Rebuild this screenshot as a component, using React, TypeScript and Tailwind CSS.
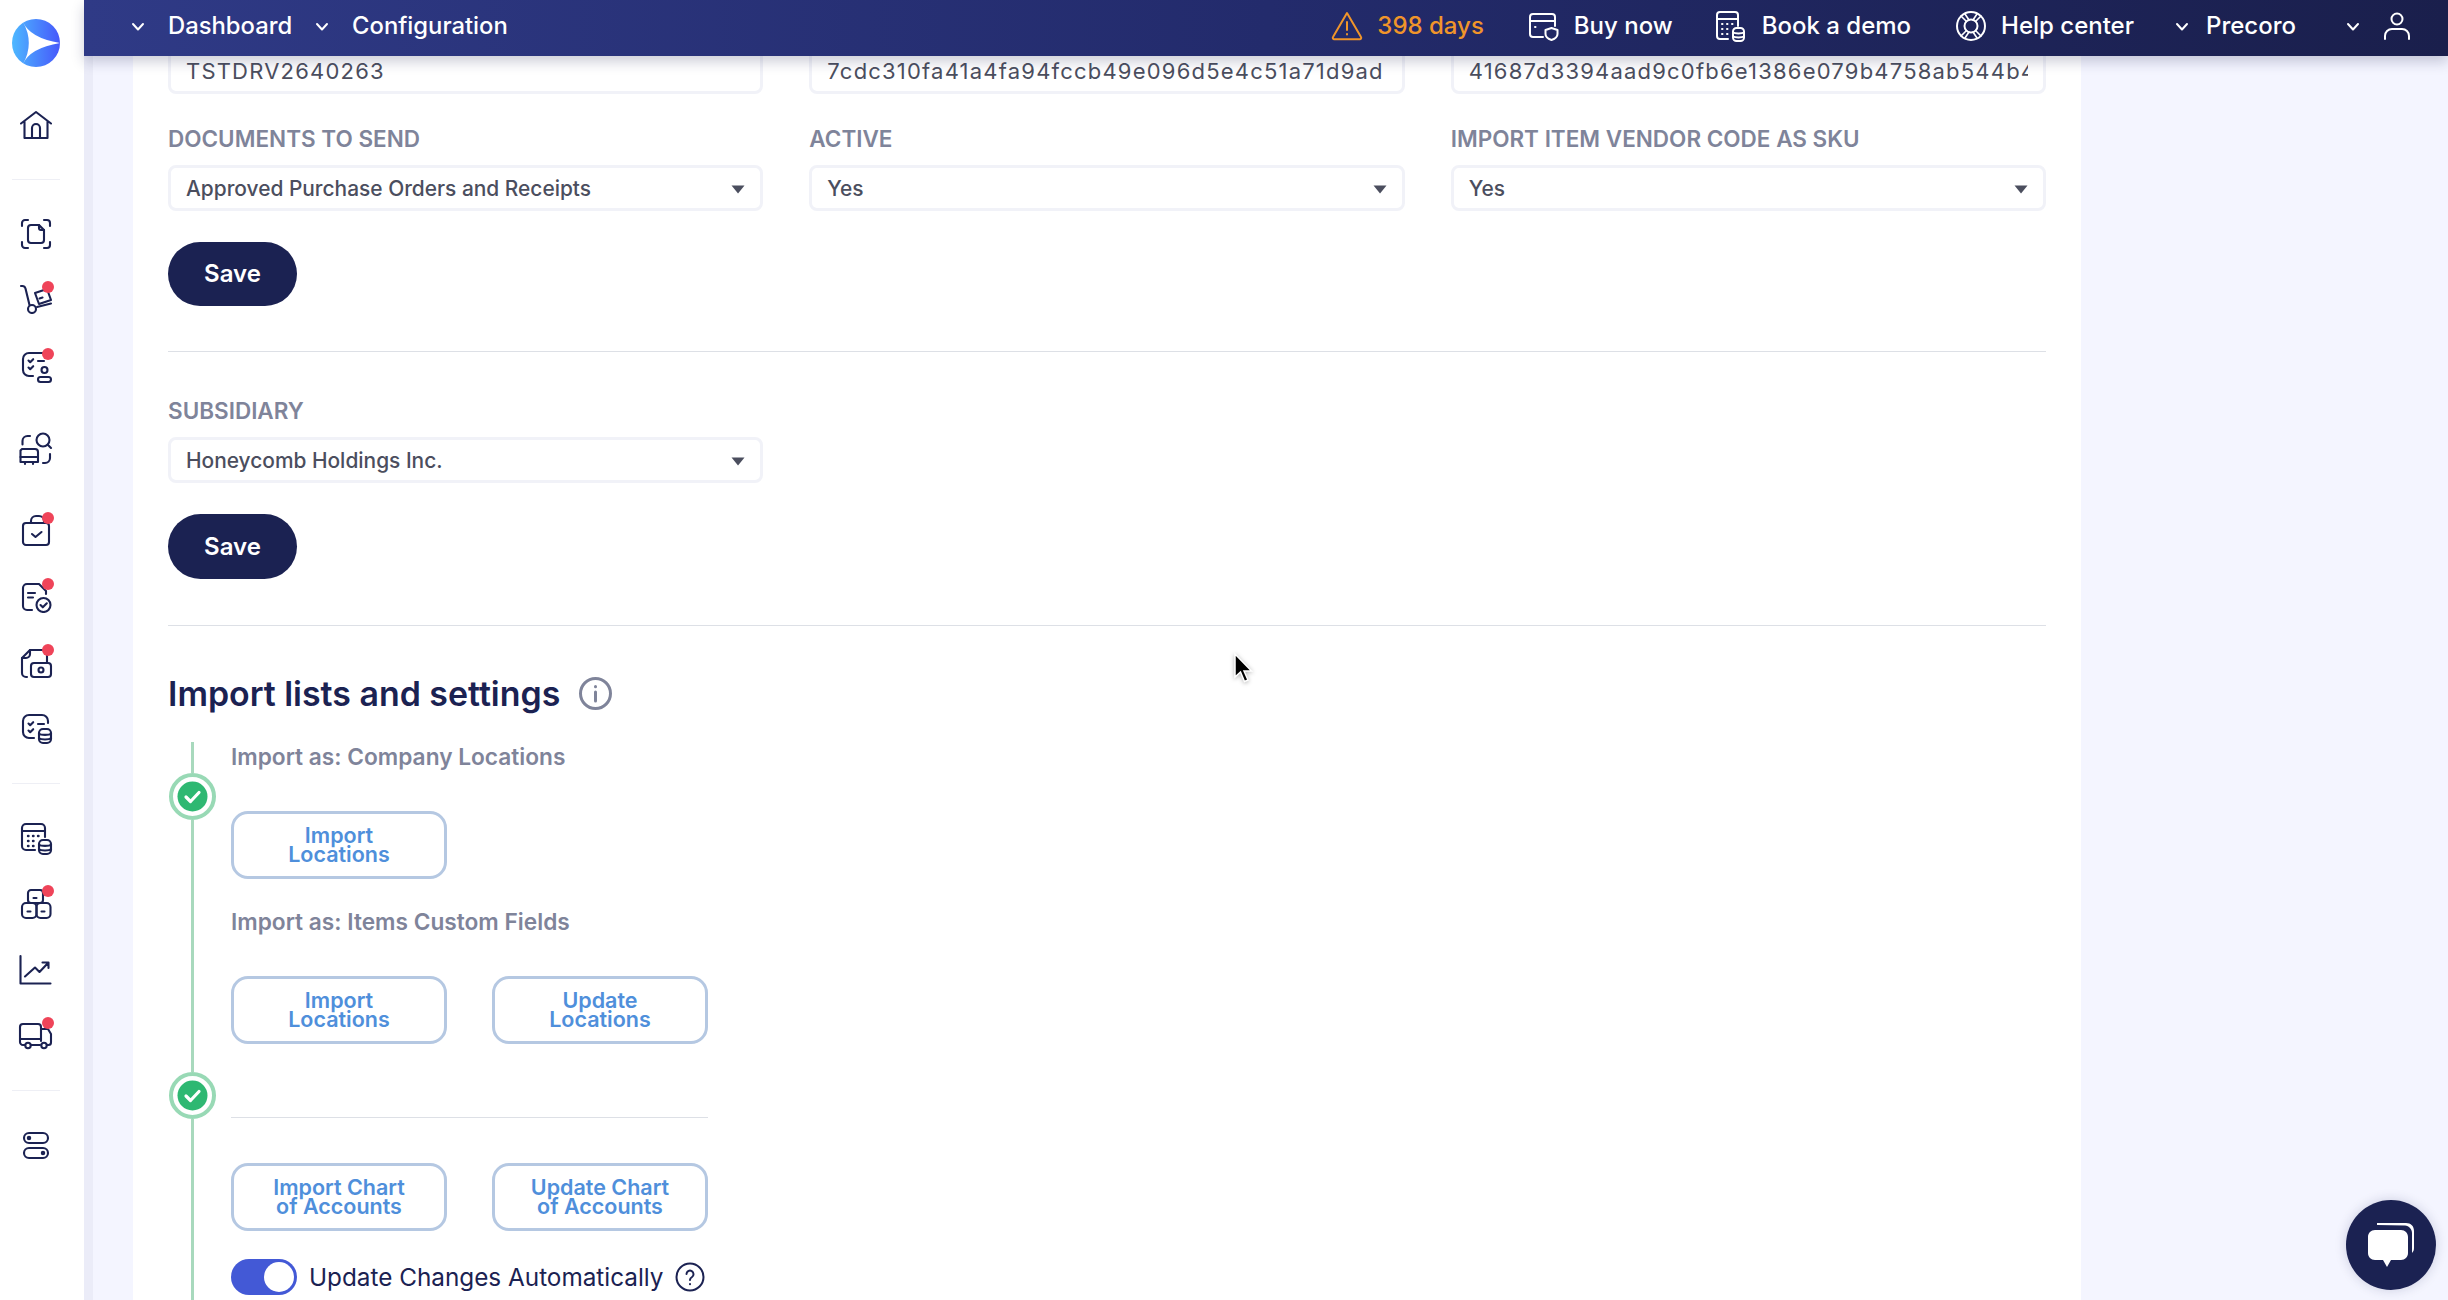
import React from "react";

const INK = "#1b2252";

function Ico({ children, size = 36, stroke = INK, sw = 2.1 }: { children: React.ReactNode; size?: number; stroke?: string; sw?: number }) {
  return (
    <svg width={size} height={size} viewBox={`0 0 ${size} ${size}`} fill="none" stroke={stroke} strokeWidth={sw} strokeLinecap="round" strokeLinejoin="round">
      {children}
    </svg>
  );
}

function Db({ x, y }: { x: number; y: number }) {
  return (
    <g transform={`translate(${x} ${y})`}>
      <rect x="0" y="0" width="12" height="14" rx="4" />
      <path d="M0 4.7c2 1.6 10 1.6 12 0M0 9.3c2 1.6 10 1.6 12 0" />
    </g>
  );
}

function SideItem({ mt, dot, children }: { mt: string; dot?: string; children: React.ReactNode }) {
  return (
    <div className={`relative h-[36px] w-[36px] shrink-0 ${mt}`}>
      {children}
      {dot && <span className={`absolute right-0 h-[12px] w-[12px] rounded-full bg-[#ef4459] ${dot}`} />}
    </div>
  );
}

function Sidebar() {
  return (
    <aside className="relative z-10 flex h-full w-[84px] shrink-0 flex-col items-center bg-white pr-[12px] shadow-[9px_0_0_#ebecf8]">
      <svg className="mt-[19px] shrink-0" width="48" height="48" viewBox="0 0 48 48">
        <defs>
          <linearGradient id="lg" x1="0" x2="1" y1="0" y2="0">
            <stop offset="0" stopColor="#4db8ff" />
            <stop offset="1" stopColor="#4658fb" />
          </linearGradient>
        </defs>
        <circle cx="24" cy="24" r="24" fill="url(#lg)" />
        <path d="M11 3 Q18 19 48 24 Q18 29 11 45 Q22.6 24 11 3z" fill="#fff" />
      </svg>
      <SideItem mt="mt-[40px]">
        <Ico>
          <path d="M3 16.5 18 5l15 11.5M6.5 14.5V31h23V14.5" />
          <path d="M14 31V21a4 4 0 0 1 8 0v10" />
        </Ico>
      </SideItem>
      <div className="mt-[36px] h-px w-[48px] shrink-0 bg-[#eeeff5]" />
      <SideItem mt="mt-[36px]">
        <Ico>
          <path d="M4 10V7a3 3 0 0 1 3-3h3M26 4h3a3 3 0 0 1 3 3v3M32 26v3a3 3 0 0 1-3 3h-3M10 32H7a3 3 0 0 1-3-3v-3" />
          <path d="M13 9h8l5 5v10a3 3 0 0 1-3 3H13a3 3 0 0 1-3-3V12a3 3 0 0 1 3-3z" />
          <path d="M21 9v3a2 2 0 0 0 2 2h3" />
        </Ico>
      </SideItem>
      <SideItem mt="mt-[26px]" dot="top-[3px]">
        <Ico>
          <path d="M3 8h1.5c1.5 0 2.5 1 3 2.5L11.5 27" />
          <circle cx="14" cy="31" r="4" />
          <path d="M19 29l14-3.5" />
          <path d="M17 15l12-4 4 11-12 4z" />
          <path d="M21.5 20.5l3-1" />
        </Ico>
      </SideItem>
      <SideItem mt="mt-[34px]" dot="top-0">
        <Ico>
          <path d="M30 5H11a6 6 0 0 0-6 6v11a6 6 0 0 0 6 6h4" />
          <path d="M10.5 12.5l1.7 1.7 3-3M10.5 19.5l1.7 1.7 3-3M20 13h6" />
          <circle cx="26.5" cy="22" r="3" />
          <rect x="20" y="29" width="13" height="5" rx="2.5" />
        </Ico>
      </SideItem>
      <SideItem mt="mt-[46px]">
        <Ico>
          <circle cx="25" cy="10" r="6.5" />
          <path d="M30 15l3 3" />
          <path d="M4.5 14.5V11a5 5 0 0 1 5-5H12M32 24v4a5 5 0 0 1-5 5h-2" />
          <path d="M4 19h13a3 3 0 0 1 3 3v10H2.5V20.500z" />
          <path d="M2.500 27H20M7 32v2M15 32v2" />
        </Ico>
      </SideItem>
      <SideItem mt="mt-[46px]" dot="top-0">
        <Ico>
          <rect x="5" y="11" width="26" height="22" rx="3" />
          <path d="M13 11V9a5 5 0 0 1 5-5h3a5 5 0 0 1 5 5v2" />
          <path d="M14 22l3.500 3 6-5" />
        </Ico>
      </SideItem>
      <SideItem mt="mt-[29px]" dot="top-[1px]">
        <Ico>
          <path d="M14 33H9a4 4 0 0 1-4-4V11a4 4 0 0 1 4-4h12l7 7v3" />
          <path d="M10 16h7M10 20.500h5" />
          <circle cx="25.500" cy="28" r="7" />
          <path d="M22.500 28l2.300 2.300 4-4" />
        </Ico>
      </SideItem>
      <SideItem mt="mt-[30px]" dot="top-[1px]">
        <Ico>
          <path d="M9 34H8a4 4 0 0 1-4-4V15l8-8h14a3 3 0 0 1 3 3v10" />
          <path d="M12 7v4a4 4 0 0 1-4 4H4" />
          <rect x="13" y="20" width="20" height="14" rx="3" />
          <circle cx="23" cy="27" r="2.500" />
        </Ico>
      </SideItem>
      <SideItem mt="mt-[31px]">
        <Ico>
          <path d="M30 13V11a6 6 0 0 0-6-6H11a6 6 0 0 0-6 6v11a6 6 0 0 0 6 6h5" />
          <path d="M10.500 13.500l1.700 1.700 3-3M10.500 20.500l1.700 1.700 3-3M20 14h6" />
          <Db x={21} y={19} />
        </Ico>
      </SideItem>
      <div className="mt-[37px] h-px w-[48px] shrink-0 bg-[#eeeff5]" />
      <SideItem mt="mt-[36px]">
        <Ico>
          <path d="M17 30H8a4 4 0 0 1-4-4V8a4 4 0 0 1 4-4h15a4 4 0 0 1 4 4v9" />
          <path d="M4 11h23" />
          <path d="M10 16h.5M15 16h.5M20 16h.5M10 21h.5M15 21h.5M10 26h.5M15 26h.5" strokeWidth="2.400" />
          <Db x={21} y={20} />
        </Ico>
      </SideItem>
      <SideItem mt="mt-[29px]" dot="top-0">
        <Ico>
          <rect x="10" y="5" width="15" height="13" rx="3" />
          <rect x="4" y="18" width="14.500" height="15" rx="4" />
          <rect x="18.500" y="18" width="14" height="15" rx="4" />
          <path d="M15.500 13h3M9.500 26.500h3M23.500 26.500h3" />
        </Ico>
      </SideItem>
      <SideItem mt="mt-[31px]">
        <Ico>
          <path d="M2.500 4v27.500h30" />
          <path d="M7 24.500 17 15.500l4.500 4.500L30 11M24.500 10.500H30.500V16" />
        </Ico>
      </SideItem>
      <SideItem mt="mt-[28px]" dot="top-[1px]">
        <Ico>
          <path d="M7 29H5a3 3 0 0 1-3-3V11a3 3 0 0 1 3-3h15a3 3 0 0 1 3 3v14" />
          <path d="M2 23h21M13 29h9M29 29h1.500a2.500 2.500 0 0 0 2.500-2.500V18l-3-5h-7" />
          <circle cx="10" cy="29.500" r="2.700" />
          <circle cx="26" cy="29.500" r="2.700" />
        </Ico>
      </SideItem>
      <div className="mt-[38px] h-px w-[48px] shrink-0 bg-[#eeeff5]" />
      <SideItem mt="mt-[36px]">
        <Ico>
          <rect x="6" y="6" width="24" height="10" rx="5" />
          <rect x="6" y="21" width="24" height="10" rx="5" />
          <circle cx="11" cy="11" r="1.200" fill={INK} />
          <circle cx="25" cy="26" r="1.200" fill={INK} />
        </Ico>
      </SideItem>
    </aside>
  );
}

function Chevron({ className }: { className: string }) {
  return (
    <svg className={`shrink-0 ${className}`} width="14" height="10" viewBox="0 0 14 10" fill="none" stroke="#fff" strokeWidth="2" strokeLinecap="round" strokeLinejoin="round">
      <path d="M2 2l5 5.500L12 2" />
    </svg>
  );
}

function Header() {
  return (
    <header className="relative z-20 flex h-[56px] shrink-0 items-center bg-gradient-to-r from-[#2f3a86] via-[#232b6c] to-[#1a1f4c] pb-[4px] pl-[47px] text-[24px] font-medium text-white shadow-[0_6px_12px_rgba(30,35,80,0.22)]">
      <Chevron className="mt-px" />
      <span className="ml-[23px] text-[23.800px]">Dashboard</span>
      <Chevron className="ml-[23px] mt-px" />
      <span className="ml-[23px] text-[23.800px]">Configuration</span>
      <div className="ml-auto flex items-center">
        <svg width="32" height="30" viewBox="0 0 32 30" fill="none" stroke="#f0952a" strokeWidth="2" strokeLinecap="round" strokeLinejoin="round">
          <path d="M16 2 30 26a1.500 1.500 0 0 1-1.300 2.300H3.300A1.500 1.500 0 0 1 2 26z" />
          <path d="M16 11v8M16 23v.5" />
        </svg>
        <span className="ml-[14px] text-[#f0952a]">398 days</span>
        <svg className="ml-[44px]" width="32" height="32" viewBox="0 0 32 32" fill="none" stroke="#fff" strokeWidth="2" strokeLinecap="round" strokeLinejoin="round">
          <path d="M15 27H5a3 3 0 0 1-3-3V7a3 3 0 0 1 3-3h19a3 3 0 0 1 3 3v9" />
          <path d="M2 11h25M7 17h.5" />
          <path d="M23.500 18l6 2v4c0 3-3 5-6 6-3-1-6-3-6-6v-4z" />
        </svg>
        <span className="ml-[14px]">Buy now</span>
        <svg className="ml-[41px]" width="32" height="32" viewBox="0 0 32 32" fill="none" stroke="#fff" strokeWidth="2" strokeLinecap="round" strokeLinejoin="round">
          <path d="M14 29H6a3 3 0 0 1-3-3V5a3 3 0 0 1 3-3h15a3 3 0 0 1 3 3v11" />
          <path d="M3 9h21M8 14h.5M13 14h.5M18 14h.5M8 19h.5M13 19h.5M8 24h.5M13 24h.5" />
          <rect x="19" y="18" width="11" height="13" rx="3.500" />
          <path d="M19 22.500c2 1.300 9 1.300 11 0M19 26.500c2 1.300 9 1.300 11 0" />
        </svg>
        <span className="ml-[16px]">Book a demo</span>
        <svg className="ml-[44px]" width="32" height="32" viewBox="0 0 32 32" fill="none" stroke="#fff" strokeWidth="2" strokeLinecap="round" strokeLinejoin="round">
          <circle cx="16" cy="16" r="14" />
          <circle cx="16" cy="16" r="6.500" />
          <path d="M6 6l5.500 5.500M26 6l-5.500 5.500M6 26l5.500-5.500M26 26l-5.500-5.500M10 4l4 6M22 4l-4 6M10 28l4-6M22 28l-4-6" strokeWidth="1.600" />
        </svg>
        <span className="ml-[14px]">Help center</span>
        <Chevron className="ml-[41px] mt-px" />
        <span className="ml-[17px]">Precoro</span>
        <Chevron className="ml-[50px] mt-px" />
        <svg className="ml-[23px] mr-[37px]" width="28" height="28" viewBox="0 0 28 28" fill="none" stroke="#fff" strokeWidth="2" strokeLinecap="round">
          <circle cx="14" cy="7" r="5.500" />
          <path d="M2 27v-3a7 7 0 0 1 7-7h10a7 7 0 0 1 7 7v3" />
        </svg>
      </div>
    </header>
  );
}

function Arrow() {
  return (
    <svg className="ml-auto mt-[2px] shrink-0" width="14" height="9" viewBox="0 0 14 9">
      <path d="M0.500 0.500h13L7 8.500z" fill="#4b4e5e" />
    </svg>
  );
}

function Input({ value }: { value: string }) {
  return (
    <div className="flex h-[46px] items-center rounded-[8px] border-[3px] border-[#f1f2f8] bg-white pl-[15px] pr-[15px] text-[22px] tracking-[1.200px] whitespace-nowrap text-[#4b4e5e]">
      <span className="min-w-0 flex-1 overflow-hidden">{value}</span>
    </div>
  );
}

function Select({ label, value }: { label: string; value: string }) {
  return (
    <div className="flex flex-col">
      <div className="h-[24px] pt-[1px] text-[22.500px] leading-[24px] font-semibold text-[#7f849a]">{label}</div>
      <div className="mt-[15px] flex h-[46px] items-center rounded-[8px] border-[3px] border-[#f1f2f8] bg-white pl-[15px] pr-[15px] text-[20.900px] font-medium text-[#4b4e5e]">
        <span className="pt-[1px]">{value}</span>
        <Arrow />
      </div>
    </div>
  );
}

function SaveBtn({ mt, h }: { mt: string; h: string }) {
  return (
    <button className={`${mt} ${h} block w-[129px] rounded-full bg-[#1b2252] text-[24px] font-semibold text-white`}>Save</button>
  );
}

function OutlineBtn({ a, b }: { a: string; b: string }) {
  return (
    <button className="h-[68px] w-[216px] rounded-[17px] border-[3px] border-[#b5c8e2] bg-white text-center text-[21.500px] leading-[19px] font-semibold text-[#4f8fdb]">
      {a}
      <br />
      {b}
    </button>
  );
}

function Dot() {
  return (
    <div className="flex h-[47px] w-[47px] shrink-0 items-center justify-center rounded-full border-[4px] border-[#98d9b5] bg-white">
      <svg width="31" height="31" viewBox="0 0 31 31">
        <circle cx="15.500" cy="15.500" r="15" fill="#2eb872" />
        <path d="M9 16l4.500 4.500L22 11.500" fill="none" stroke="#fff" strokeWidth="3.200" strokeLinecap="round" strokeLinejoin="round" />
      </svg>
    </div>
  );
}

function Steps() {
  return (
    <div className="mt-[28px] flex">
      <div className="flex w-[48px] shrink-0 flex-col items-center">
        <div className="h-[31px] w-[3px] bg-[#a8d9bd]" />
        <Dot />
        <div className="h-[252px] w-[3px] bg-[#a8d9bd]" />
        <Dot />
        <div className="h-[300px] w-[3px] bg-[#a8d9bd]" />
      </div>
      <div className="ml-[15px] w-[477px]">
        <div className="h-[30px] text-[22.700px] leading-[30px] font-semibold text-[#7f849a]">Import as: Company Locations</div>
        <div className="mt-[39px] flex">
          <OutlineBtn a="Import" b="Locations" />
        </div>
        <div className="mt-[28px] h-[30px] text-[22.700px] leading-[30px] font-semibold text-[#7f849a]">Import as: Items Custom Fields</div>
        <div className="mt-[39px] flex gap-[45px]">
          <OutlineBtn a="Import" b="Locations" />
          <OutlineBtn a="Update" b="Locations" />
        </div>
        <div className="mt-[73px] h-px bg-[#dde0e6]" />
        <div className="mt-[45px] flex gap-[45px]">
          <OutlineBtn a="Import Chart" b="of Accounts" />
          <OutlineBtn a="Update Chart" b="of Accounts" />
        </div>
        <div className="mt-[27px] flex items-center whitespace-nowrap">
          <div className="flex h-[36px] w-[66px] shrink-0 items-center justify-end rounded-full bg-[#4359d6] pr-[3px]">
            <div className="h-[30px] w-[30px] rounded-full bg-white" />
          </div>
          <span className="ml-[12px] pt-[1px] text-[24.300px] text-[#1b2252]">Update Changes Automatically</span>
          <svg className="ml-[11px] shrink-0" width="30" height="30" viewBox="0 0 30 30" fill="none" stroke="#1b2252" strokeWidth="2" strokeLinecap="round" strokeLinejoin="round">
            <circle cx="15" cy="15" r="13.500" />
            <path d="M11.500 12a3.500 3.500 0 1 1 5.500 3c-1.300.8-2 1.500-2 3" />
            <path d="M15 22v.3" />
          </svg>
        </div>
      </div>
    </div>
  );
}

export default function App() {
  return (
    <div className="relative flex h-[1300px] w-[2448px] overflow-hidden bg-[#f4f5ff] font-['Inter',sans-serif]">
      <Sidebar />
      <div className="flex h-full min-w-0 flex-1 flex-col">
        <Header />
        <main className="min-h-0 flex-1 overflow-hidden pl-[49px] pr-[367px]">
          <div className="flow-root h-full bg-white px-[35px]">
            <div className="-mt-[8px] grid grid-cols-3 gap-x-[46px]">
              <Input value="TSTDRV2640263" />
              <Input value="7cdc310fa41a4fa94fccb49e096d5e4c51a71d9ad" />
              <Input value="41687d3394aad9c0fb6e1386e079b4758ab544b4c" />
            </div>
            <div className="mt-[32px] grid grid-cols-3 gap-x-[46px]">
              <Select label="DOCUMENTS TO SEND" value="Approved Purchase Orders and Receipts" />
              <Select label="ACTIVE" value="Yes" />
              <Select label="IMPORT ITEM VENDOR CODE AS SKU" value="Yes" />
            </div>
            <SaveBtn mt="mt-[31px]" h="h-[64px]" />
            <div className="mt-[45px] h-px bg-[#dde0e6]" />
            <div className="mt-[46px] grid grid-cols-3 gap-x-[46px]">
              <Select label="SUBSIDIARY" value="Honeycomb Holdings Inc." />
            </div>
            <SaveBtn mt="mt-[31px]" h="h-[65px]" />
            <div className="mt-[46px] h-px bg-[#dde0e6]" />
            <div className="mt-[48px] flex h-[40px] items-center">
              <h2 className="text-[33.900px] leading-[40px] font-semibold text-[#1b2252]">Import lists and settings</h2>
              <svg className="ml-[19px] mb-[2px]" width="33" height="33" viewBox="0 0 33 33" fill="none" stroke="#7f849a" strokeWidth="3" strokeLinecap="round">
                <circle cx="16.500" cy="16.500" r="15" />
                <path d="M16.500 15v9M16.500 9.500v.3" />
              </svg>
            </div>
            <Steps />
          </div>
        </main>
      </div>
      <svg className="absolute left-[1232px] top-[652px] drop-shadow-[0_1px_2px_rgba(0,0,0,0.3)]" width="24" height="36" viewBox="0 0 24 36">
        <path d="M3 2v23l5.500-5 4 9.500 3.500-1.500-4-9h7.500z" fill="#000" stroke="#fff" strokeWidth="1.500" />
      </svg>
      <div className="absolute left-[2346px] top-[1200px] z-30 flex h-[90px] w-[90px] items-center justify-center rounded-full bg-[#1b2252] shadow-[0_0_12px_rgba(27,34,82,0.18)]">
        <svg width="48" height="48" viewBox="0 0 48 48">
          <path d="M10 2h29c5 0 8 3 8 8v17c0 2-.5 3.500-2 5V12c0-4-3-7-7-7.500L10 4z" fill="#fff" />
          <path d="M8 9h26c4 0 7 3 7 7v16c0 4-3 7-7 7H24l-4 7-4-7H8c-4 0-7-3-7-7V16c0-4 3-7 7-7z" fill="#fff" />
        </svg>
      </div>
    </div>
  );
}
